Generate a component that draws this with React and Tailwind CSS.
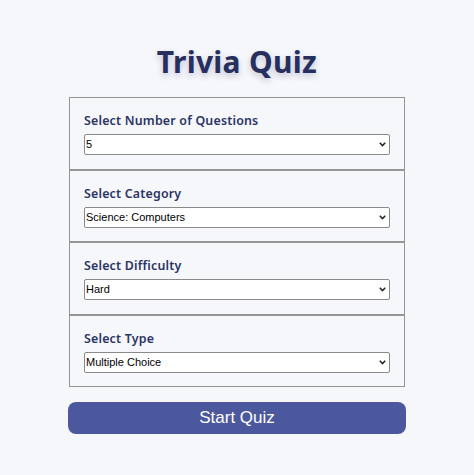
import { useState } from "react";

const sections = [
  { label: "Select Number of Questions", options: ["5", "10", "15", "20"] },
  { label: "Select Category", options: ["Science: Computers", "General Knowledge", "History"] },
  { label: "Select Difficulty", options: ["Hard", "Medium", "Easy"] },
  { label: "Select Type", options: ["Multiple Choice", "True / False"] },
];

export default function App() {
  const [values, setValues] = useState(sections.map((s) => s.options[0]));

  return (
    <div className="min-h-[475px] w-full bg-[#f6f7fb] flex flex-col items-center pt-[38px] font-['Noto_Sans',sans-serif]">
      {/* Title */}
      <h1 className="text-[30px] leading-[48px] font-bold text-[#262f5e] tracking-[0.3px] [text-shadow:0_3px_6px_rgba(38,47,94,0.25)]">
        Trivia Quiz
      </h1>

      {/* Options */}
      <div className="mt-[11px] w-[336px] flex flex-col">
        {sections.map((s, i) => (
          <div key={s.label} className="border border-[#959595] px-[14px] pt-[12px] h-[72.5px]">
            <div className="text-[12.4px] leading-[22px] font-semibold text-[#2b3463] tracking-[0.2px]">
              {s.label}
            </div>
            <div className="relative mt-[2px]">
              <select
                value={values[i]}
                onChange={(e) => {
                  const next = [...values];
                  next[i] = e.target.value;
                  setValues(next);
                }}
                className="appearance-none block w-full h-[21px] bg-white border border-[#8a8a8a] rounded-[2px] text-[11px] leading-[19px] text-black font-['Liberation_Sans',Arial,sans-serif] pl-[1px] pr-4 outline-none"
              >
                {s.options.map((o) => (
                  <option key={o}>{o}</option>
                ))}
              </select>
              <svg
                className="absolute right-[4px] top-[8px] pointer-events-none"
                width="7"
                height="5"
                viewBox="0 0 7 5"
                fill="none"
              >
                <path d="M0.8 0.8 L3.5 3.6 L6.2 0.8" stroke="#222" strokeWidth="1.5" />
              </svg>
            </div>
          </div>
        ))}
      </div>

      {/* Start */}
      <button className="mt-[15px] w-[338px] h-[32px] rounded-[8px] bg-[#4c589e] text-white text-[17px] font-['Liberation_Sans',Arial,sans-serif]">
        Start Quiz
      </button>
    </div>
  );
}
